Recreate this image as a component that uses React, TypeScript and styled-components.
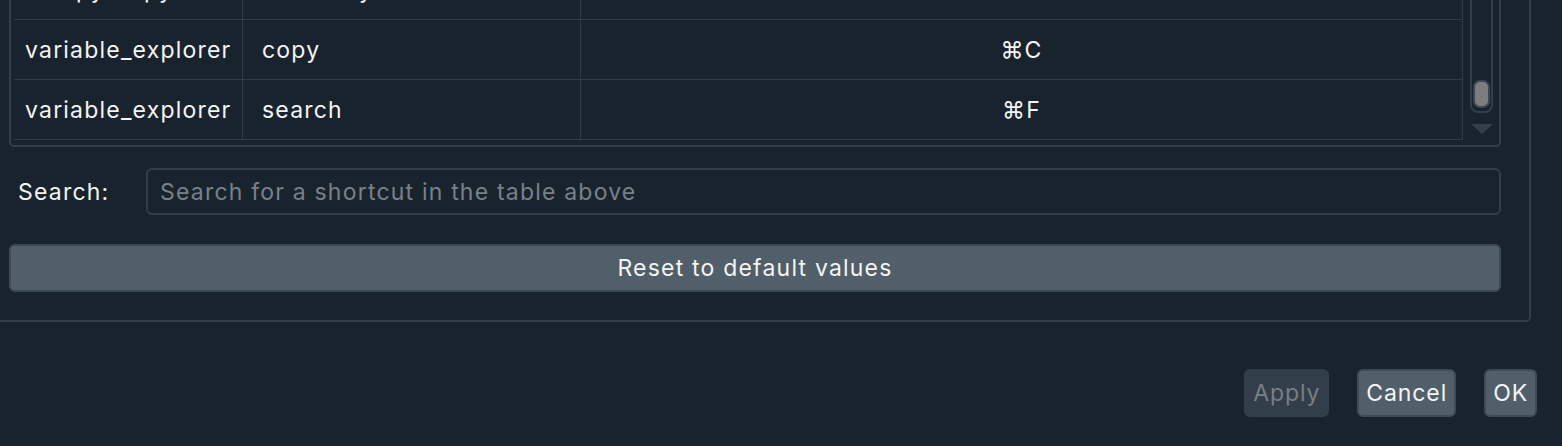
import React from "react";
import styled, { createGlobalStyle } from "styled-components";

const Global = createGlobalStyle`
  html, body {
    margin: 0;
    padding: 0;
    background: #19232d;
    overflow: hidden;
  }
  body {
    font-family: Inter, "Noto Sans", "DejaVu Sans", sans-serif;
    font-size: 23px;
    letter-spacing: 1.2px;
    color: #f0f0f0;
  }
`;

const Page = styled.div`
  width: 1562px;
  height: 446px;
  display: flex;
  flex-direction: column;
  overflow: hidden;
`;

const Pane = styled.div`
  margin: -60px 31px 0 -12px;
  border: 2px solid #323f4a;
  border-radius: 5px;
  padding: 8px 28px 28px 19px;
  display: flex;
  flex-direction: column;
`;

const TableFrame = styled.div`
  border: 2px solid #323f4a;
  border-radius: 5px;
  padding: 8px 0 5px 3px;
  display: flex;
`;

const Grid = styled.div`
  flex: 1;
  display: flex;
  flex-direction: column;
`;

const Row = styled.div`
  display: grid;
  grid-template-columns: 229px 338px 882px;
  height: 60px;
  box-sizing: border-box;
  border-bottom: 1px solid #2f3d48;
`;

const Cell = styled.div<{ $pad: number; $center?: boolean }>`
  display: flex;
  align-items: center;
  justify-content: ${(p) => (p.$center ? "center" : "flex-start")};
  padding-left: ${(p) => p.$pad}px;
  border-right: 1px solid #2f3d48;
  white-space: nowrap;
  color: #f4f4f4;
`;

const Scroll = styled.div`
  width: 37px;
  display: flex;
  flex-direction: column;
  align-items: center;
`;

const Track = styled.div`
  width: 19px;
  height: 148px;
  margin-left: 1px;
  border: 2px solid #323f4a;
  border-top: none;
  border-radius: 0 0 8px 8px;
  display: flex;
  flex-direction: column;
  justify-content: flex-end;
  align-items: center;
  padding-bottom: 3px;
`;

const Thumb = styled.div`
  width: 13px;
  height: 24px;
  background: #7d7d7d;
  border: 2px solid #3a4652;
  border-radius: 7px;
`;

const Arrow = styled.svg`
  margin-top: 11px;
  margin-left: 2px;
`;

const SearchRow = styled.div`
  display: flex;
  align-items: center;
  margin-top: 21px;
  padding-left: 9px;
`;

const Label = styled.span`
  width: 128px;
  color: #f4f4f4;
`;

const Input = styled.input`
  flex: 1;
  height: 47px;
  box-sizing: border-box;
  background: #19232d;
  border: 2px solid #323f4a;
  border-radius: 6px;
  padding: 0 12px;
  font: inherit;
  letter-spacing: inherit;
  color: #f0f0f0;
  outline: none;
  &::placeholder {
    color: #78818a;
  }
`;

const Button = styled.button<{ $disabled?: boolean }>`
  height: 48px;
  box-sizing: border-box;
  border-radius: 6px;
  border: 2px solid ${(p) => (p.$disabled ? "#323f4a" : "#3e4a55")};
  background: ${(p) => (p.$disabled ? "#323f4a" : "#505f69")};
  color: ${(p) => (p.$disabled ? "#787e84" : "#f4f4f4")};
  font: inherit;
  letter-spacing: 0.9px;
  padding: 0 7px;
`;

const ResetButton = styled(Button)`
  margin-top: 29px;
  width: 100%;
  letter-spacing: inherit;
`;

const Footer = styled.div`
  display: flex;
  justify-content: flex-end;
  gap: 28px;
  margin-top: 47px;
  padding-right: 25px;
`;

const rows = [
  ["numpy_copy", "run analysis", ""],
  ["variable_explorer", "copy", "⌘C"],
  ["variable_explorer", "search", "⌘F"],
];

export default function App() {
  return (
    <Page>
      <Global />
      <Pane>
        <TableFrame>
          <Grid>
            {rows.map((r, i) => (
              <Row key={i}>
                <Cell $pad={11}>{r[0]}</Cell>
                <Cell $pad={19}>{r[1]}</Cell>
                <Cell $pad={0} $center>
                  {r[2]}
                </Cell>
              </Row>
            ))}
          </Grid>
          <Scroll>
            <Track>
              <Thumb />
            </Track>
            <Arrow width="22" height="10" viewBox="0 0 22 10">
              <path d="M0 0 H22 L11 10 Z" fill="#33404b" />
            </Arrow>
          </Scroll>
        </TableFrame>
        <SearchRow>
          <Label>Search:</Label>
          <Input placeholder="Search for a shortcut in the table above" />
        </SearchRow>
        <ResetButton>Reset to default values</ResetButton>
      </Pane>
      <Footer>
        <Button $disabled>Apply</Button>
        <Button>Cancel</Button>
        <Button>OK</Button>
      </Footer>
    </Page>
  );
}
